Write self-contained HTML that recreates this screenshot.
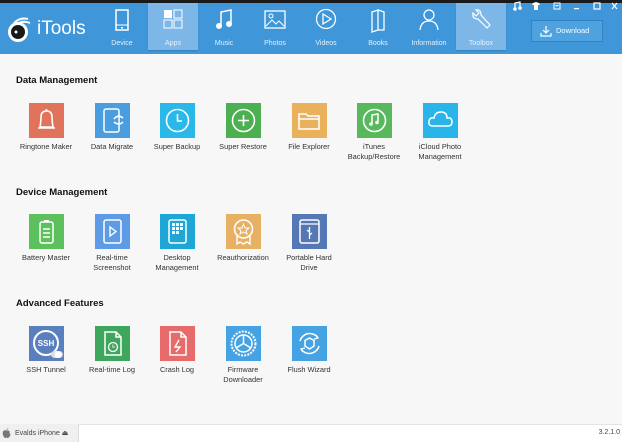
<!DOCTYPE html>
<html><head><style>
*{margin:0;padding:0;box-sizing:border-box}
body{width:622px;height:442px;overflow:hidden;background:#f7f7f7;font-family:"Liberation Sans",sans-serif;position:relative}
.top{position:absolute;left:0;top:0;width:622px;height:54px;background:#3f97da;border-top:3px solid #1a1a1a}
.tab{position:absolute;top:0;width:50px;height:47px;color:#e6f1fb;font-size:7px;text-align:center}
.tab.on{background:#7cb7e8;box-shadow:0 1px 1px rgba(0,0,0,.15)}
.tab svg{position:absolute;left:14px;top:5px}
.tab span{position:absolute;left:0;right:0;top:37px}
.h{position:absolute;left:16px;font-size:9.5px;font-weight:bold;color:#111}
.ic{position:absolute;width:35px;height:35px}
.ic svg{position:absolute;left:0;top:0}
.lb{position:absolute;width:80px;text-align:center;font-size:7.4px;line-height:10px;color:#333}
.sb{position:absolute;left:0;top:424px;width:622px;height:18px;background:#f0f0f0}
</style></head><body>
<div class="top">
 <svg style="position:absolute;left:6px;top:14px" width="26" height="26" viewBox="0 0 26 26"><path d="M8 6 Q14 0 22 2 M11 7 Q17 3 24 6" stroke="#fff" stroke-width="2" fill="none"/><circle cx="12" cy="15" r="10" fill="#fff"/><circle cx="12" cy="15" r="7" fill="#1a1a1a"/><circle cx="10" cy="15" r="1.5" fill="#fff"/></svg>
 <div style="position:absolute;left:37px;top:15px;color:#fff;font-size:19px">iTools</div>
 <div class="tab" style="left:97px"><svg width="22" height="28" viewBox="0 0 22 28"><rect x="5" y="2" width="12" height="20" fill="none" stroke="#fff" stroke-width="1.5"/><line x1="5" y1="17" x2="17" y2="17" stroke="#fff"/><rect x="10" y="19" width="2" height="1.5" fill="#fff"/></svg><span>Device</span></div>
 <div class="tab on" style="left:148px"><svg width="22" height="28" viewBox="0 0 22 28"><rect x="2" y="2" width="8" height="8" fill="#fff"/><rect x="12" y="2" width="8" height="8" fill="none" stroke="#fff"/><rect x="2" y="12" width="8" height="8" fill="none" stroke="#fff"/><rect x="12" y="12" width="8" height="8" fill="none" stroke="#fff"/></svg><span>Apps</span></div>
 <div class="tab" style="left:199px"><svg width="22" height="28" viewBox="0 0 22 28"><path d="M8 18 V4 L18 2 V15" stroke="#fff" stroke-width="1.5" fill="none"/><circle cx="6" cy="18" r="3" fill="#fff"/><circle cx="16" cy="16" r="3" fill="#fff"/></svg><span>Music</span></div>
 <div class="tab" style="left:250px"><svg width="22" height="28" viewBox="0 0 22 28"><rect x="1" y="3" width="20" height="17" fill="none" stroke="#fff" stroke-width="1.3"/><circle cx="7" cy="8" r="2" fill="none" stroke="#fff"/><path d="M2 18 L8 12 L12 16 L15 13 L20 18" stroke="#fff" fill="none"/></svg><span>Photos</span></div>
 <div class="tab" style="left:301px"><svg width="22" height="28" viewBox="0 0 22 28"><circle cx="11" cy="11" r="9.5" fill="none" stroke="#fff" stroke-width="1.3"/><path d="M8 6 L16 11 L8 16 Z" fill="none" stroke="#fff" stroke-width="1.3"/></svg><span>Videos</span></div>
 <div class="tab" style="left:353px"><svg width="22" height="28" viewBox="0 0 22 28"><path d="M5 4 L11 2 L11 22 L5 24 Z M11 2 L17 4 L17 22 L11 22" stroke="#fff" stroke-width="1.3" fill="none"/></svg><span>Books</span></div>
 <div class="tab" style="left:404px"><svg width="22" height="28" viewBox="0 0 22 28"><circle cx="11" cy="7" r="5" fill="none" stroke="#fff" stroke-width="1.3"/><path d="M2 22 Q3 13 11 13 Q19 13 20 22" stroke="#fff" stroke-width="1.3" fill="none"/></svg><span>Information</span></div>
 <div class="tab on" style="left:456px"><svg width="22" height="28" viewBox="0 0 22 28"><path d="M3 5 L6 8 L9 5 L6 2 Q11 1 11 7 L20 17 L17 20 L8 11 Q2 11 3 5 Z" stroke="#fff" stroke-width="1.2" fill="none"/></svg><span>Toolbox</span></div>
 <div style="position:absolute;left:531px;top:17px;width:72px;height:22px;background:#4ea2e0;border:1px solid #2f82c4;color:#fff;font-size:7.5px;line-height:20px;padding-left:24px">Download<svg style="position:absolute;left:8px;top:4px" width="12" height="12" viewBox="0 0 12 12"><path d="M6 1 V8 M3 5 L6 8 L9 5 M1 8 V11 H11 V8" stroke="#fff" stroke-width="1.2" fill="none"/></svg></div>
 <svg style="position:absolute;left:512px;top:-3px" width="110" height="12" viewBox="0 0 110 12"><g fill="#fff" stroke="#fff"><path d="M3 9 V3 L8 2 V8" fill="none" stroke-width="1.2"/><circle cx="3" cy="9" r="1.3"/><circle cx="8" cy="8" r="1.3"/><path d="M21 3 L24 2 L27 3 L28 5 L26 5 V10 H22 V5 H20 Z" stroke="none"/><rect x="42" y="3" width="6" height="6" fill="none"/><rect x="43.5" y="5" width="3" height="1.2" stroke="none"/><rect x="62" y="8" width="5" height="1.2" stroke="none"/><rect x="82" y="3" width="6" height="6" fill="none" stroke-width="1.2"/><path d="M100 3 L105 9 M105 3 L100 9" stroke-width="1.2"/></g></svg>
</div>

<div class="h" style="top:75px">Data Management</div>
<div class="ic" style="left:29px;top:103px;background:#e0735a"><svg width="35" height="35"><path d="M11 24 Q12 18 12 14 Q12 8 17.5 8 Q23 8 23 14 Q23 18 24 24 Z M9 25 H26 M17.5 6 V8" stroke="#fff" stroke-width="1.6" fill="none"/></svg></div>
<div class="ic" style="left:95px;top:103px;background:#4a9ee0"><svg width="35" height="35"><rect x="9" y="6" width="15" height="23" rx="2" fill="none" stroke="#fff" stroke-width="1.5"/><path d="M19 16 Q23 11 28 15 M28 19 Q24 23 19 19" stroke="#fff" stroke-width="1.5" fill="none"/></svg></div>
<div class="ic" style="left:160px;top:103px;background:#2ab8e8"><svg width="35" height="35"><circle cx="17.5" cy="17.5" r="11" fill="none" stroke="#fff" stroke-width="1.6"/><path d="M17.5 11 V18 H22" stroke="#fff" stroke-width="1.6" fill="none"/></svg></div>
<div class="ic" style="left:226px;top:103px;background:#4caf50"><svg width="35" height="35"><circle cx="17.5" cy="17.5" r="11" fill="none" stroke="#fff" stroke-width="1.6"/><path d="M17.5 12 V23 M12 17.5 H23" stroke="#fff" stroke-width="1.6"/></svg></div>
<div class="ic" style="left:292px;top:103px;background:#eab15c"><svg width="35" height="35"><path d="M7 11 H14 L16 13 H27 V26 H7 Z M7 16 H27" stroke="#fff" stroke-width="1.5" fill="none"/></svg></div>
<div class="ic" style="left:357px;top:103px;background:#58b85c"><svg width="35" height="35"><circle cx="17.5" cy="17.5" r="11" fill="none" stroke="#fff" stroke-width="1.6"/><path d="M15 21 V12 L21 11 V19" stroke="#fff" stroke-width="1.5" fill="none"/><circle cx="14" cy="21" r="1.8" fill="#fff"/><circle cx="20" cy="19.5" r="1.8" fill="#fff"/></svg></div>
<div class="ic" style="left:423px;top:103px;background:#29b5ea"><svg width="35" height="35"><path d="M10 23 Q5 23 6 18 Q7 14 11 15 Q12 9 18 9 Q24 9 24 15 Q29 14 29 19 Q29 23 25 23 Z" stroke="#fff" stroke-width="1.5" fill="none"/></svg></div>
<div class="lb" style="left:6px;top:142px">Ringtone Maker</div>
<div class="lb" style="left:72px;top:142px">Data Migrate</div>
<div class="lb" style="left:137px;top:142px">Super Backup</div>
<div class="lb" style="left:203px;top:142px">Super Restore</div>
<div class="lb" style="left:269px;top:142px">File Explorer</div>
<div class="lb" style="left:334px;top:142px">iTunes<br>Backup/Restore</div>
<div class="lb" style="left:400px;top:142px">iCloud Photo<br>Management</div>

<div class="h" style="top:187px">Device Management</div>
<div class="ic" style="left:29px;top:214px;background:#5cc05c"><svg width="35" height="35"><rect x="11" y="8" width="13" height="21" rx="2" fill="none" stroke="#fff" stroke-width="1.5"/><rect x="15" y="6" width="5" height="2" fill="#fff"/><path d="M14 15 H21 M14 19 H21 M14 23 H21" stroke="#fff" stroke-width="1.5"/></svg></div>
<div class="ic" style="left:95px;top:214px;background:#5e9be6"><svg width="35" height="35"><rect x="9" y="6" width="17" height="23" rx="2" fill="none" stroke="#fff" stroke-width="1.5"/><path d="M15 13 L21 17.5 L15 22 Z" stroke="#fff" stroke-width="1.4" fill="none"/></svg></div>
<div class="ic" style="left:160px;top:214px;background:#1ea7d6"><svg width="35" height="35"><rect x="9" y="6" width="17" height="23" rx="2" fill="none" stroke="#fff" stroke-width="1.5"/><g fill="#fff"><rect x="12" y="9" width="3" height="3"/><rect x="16" y="9" width="3" height="3"/><rect x="20" y="9" width="3" height="3"/><rect x="12" y="13" width="3" height="3"/><rect x="16" y="13" width="3" height="3"/><rect x="20" y="13" width="3" height="3"/><rect x="12" y="17" width="3" height="3"/><rect x="16" y="17" width="3" height="3"/></g></svg></div>
<div class="ic" style="left:226px;top:214px;background:#e8b062"><svg width="35" height="35"><circle cx="17.5" cy="15" r="9" fill="none" stroke="#fff" stroke-width="1.6"/><path d="M17.5 10 L19 14 L23 14 L20 16.5 L21 20 L17.5 18 L14 20 L15 16.5 L12 14 L16 14 Z" stroke="#fff" fill="none"/><path d="M11 22 V30 L14 28 L17.5 30 L21 28 L24 30 V22" stroke="#fff" stroke-width="1.4" fill="none"/></svg></div>
<div class="ic" style="left:292px;top:214px;background:#5577b5"><svg width="35" height="35"><rect x="8" y="6" width="19" height="23" rx="2" fill="none" stroke="#fff" stroke-width="1.5"/><path d="M8 10 H27 M17.5 13 V25 M15 16 L17.5 18 M20 19 L17.5 21" stroke="#fff" stroke-width="1.3"/></svg></div>
<div class="lb" style="left:6px;top:253px">Battery Master</div>
<div class="lb" style="left:72px;top:253px">Real-time<br>Screenshot</div>
<div class="lb" style="left:137px;top:253px">Desktop<br>Management</div>
<div class="lb" style="left:203px;top:253px">Reauthorization</div>
<div class="lb" style="left:269px;top:253px">Portable Hard<br>Drive</div>

<div class="h" style="top:298px">Advanced Features</div>
<div class="ic" style="left:29px;top:326px;background:#5a7fbf"><svg width="35" height="35"><circle cx="17" cy="17" r="12" fill="none" stroke="#fff" stroke-width="2"/><text x="17" y="20" fill="#fff" font-size="8" font-weight="bold" text-anchor="middle" font-family="Liberation Sans">SSH</text><rect x="22" y="25" width="12" height="7" rx="3.5" fill="#ddd"/><circle cx="29" cy="28.5" r="3.5" fill="#fff"/></svg></div>
<div class="ic" style="left:95px;top:326px;background:#3fa65d"><svg width="35" height="35"><path d="M10 6 H21 L26 11 V29 H10 Z M21 6 V11 H26" stroke="#fff" stroke-width="1.5" fill="none"/><circle cx="18" cy="21" r="4.5" fill="none" stroke="#fff" stroke-width="1.3"/><path d="M18 18.5 V21 H20" stroke="#fff"/></svg></div>
<div class="ic" style="left:160px;top:326px;background:#e86b6b"><svg width="35" height="35"><path d="M10 6 H21 L26 11 V29 H10 Z M21 6 V11 H26" stroke="#fff" stroke-width="1.5" fill="none"/><path d="M19 14 L15 21 H20 L16 26" stroke="#fff" stroke-width="1.4" fill="none"/></svg></div>
<div class="ic" style="left:226px;top:326px;background:#45a3e4"><svg width="35" height="35"><circle cx="17.5" cy="17.5" r="12" fill="none" stroke="#fff" stroke-width="2" stroke-dasharray="2 1.2"/><circle cx="17.5" cy="17.5" r="8.5" fill="none" stroke="#fff" stroke-width="1.5"/><path d="M17.5 17.5 V9 M17.5 17.5 L10 22 M17.5 17.5 L25 22" stroke="#fff" stroke-width="1.5"/></svg></div>
<div class="ic" style="left:292px;top:326px;background:#45a3e4"><svg width="35" height="35"><path d="M8 15 A10 10 0 0 1 26 12 M27 20 A10 10 0 0 1 9 23" stroke="#fff" stroke-width="1.5" fill="none"/><path d="M24 9 L26 12 L22 13 M11 26 L9 23 L13 22" stroke="#fff" stroke-width="1.3" fill="none"/><path d="M17.5 12 L22 14.5 V20 L17.5 23 L13 20 V14.5 Z" stroke="#fff" stroke-width="1.5" fill="none"/></svg></div>
<div class="lb" style="left:6px;top:365px">SSH Tunnel</div>
<div class="lb" style="left:72px;top:365px">Real-time Log</div>
<div class="lb" style="left:137px;top:365px">Crash Log</div>
<div class="lb" style="left:203px;top:365px">Firmware<br>Downloader</div>
<div class="lb" style="left:269px;top:365px">Flush Wizard</div>

<div class="sb">
 <svg style="position:absolute;left:2px;top:4px" width="9" height="10" viewBox="0 0 9 10"><path d="M4.5 3 Q2 1.5 1 4 Q0.5 7 2.5 9.5 Q3.5 10 4.5 9.3 Q5.5 10 6.5 9.5 Q8 8 8.3 6.5 Q6.8 5.5 7.5 3.5 Q6 2 4.5 3 Z M4.5 2.5 Q5 0.5 6.5 0.3" fill="#777" stroke="#777" stroke-width="0.5"/></svg>
 <div style="position:absolute;left:15px;top:5px;font-size:7px;color:#444">Evalds iPhone ⏏</div>
 <div style="position:absolute;left:78px;top:0;right:0;height:18px;background:#fff;border-left:1px solid #ddd;border-top:1px solid #e4e4e4"></div>
 <div style="position:absolute;right:2px;top:5px;font-size:7px;color:#444">3.2.1.0</div>
</div>
</body></html>
